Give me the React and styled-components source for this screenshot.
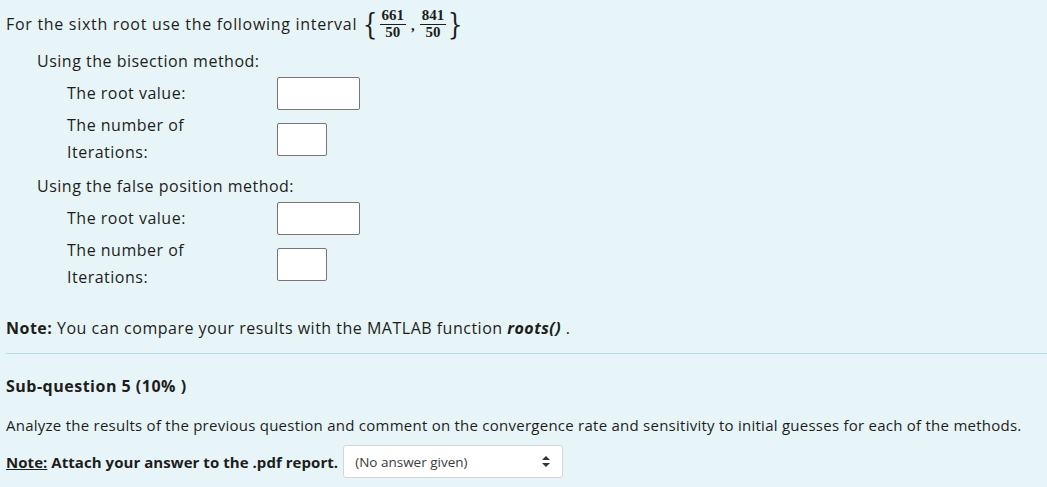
import styled, { createGlobalStyle } from 'styled-components'

const Global = createGlobalStyle`
  html, body {
    margin: 0;
    background: #e7f5f8;
  }
  body {
    font-family: "Open Sans", Lato, sans-serif;
    font-size: 16px;
    letter-spacing: 0.5px;
    color: #1d1d1b;
  }
`

const Page = styled.div`
  padding: 4px 6px 0 6px;
`

const Intro = styled.div`
  display: flex;
  align-items: center;
  height: 40px;
  letter-spacing: 0.7px;
`

const Math = styled.span`
  display: inline-flex;
  align-items: center;
  margin-left: 6px;
  font-family: "Liberation Serif", "DejaVu Serif", serif;
  font-weight: bold;
  font-size: 15px;
  letter-spacing: 0;
`

const Brace = styled.span`
  font-family: "DejaVu Serif", serif;
  font-weight: normal;
  font-size: 29px;
  line-height: 1;
  margin: 0 -2px;
  transform: scaleX(0.8);
`

const Frac = styled.span`
  display: inline-flex;
  flex-direction: column;
  align-items: center;
  margin: 0 2px;
  line-height: 15px;
`

const Num = styled.span`
  border-bottom: 1px solid #1d1d1b;
  padding: 0 2px 1px;
`

const Comma = styled.span`
  align-self: flex-end;
  margin: 0 3px 6px;
`

const Method = styled.div`
  margin: ${p => p.$top || 4}px 0 0 31px;
  line-height: 27px;
`

const Row = styled.div`
  display: flex;
  align-items: flex-start;
  margin-top: 2px;
`

const Label = styled.div`
  width: 271px;
  box-sizing: border-box;
  padding-left: 61px;
  line-height: 27px;
  padding-top: ${p => p.$pt || 0}px;
`

const Box = styled.div`
  width: ${p => p.$w}px;
  height: 33px;
  margin-top: ${p => p.$top || 0}px;
  box-sizing: border-box;
  background: #fff;
  border: 1px solid #767676;
  border-radius: 2px;
`

const Note = styled.p`
  margin: 26px 0 0;
  line-height: 22px;
`

const Rule = styled.hr`
  border: none;
  border-top: 1px solid #b4dce6;
  margin: 14px -6px 0 0;
`

const Heading = styled.div`
  font-weight: bold;
  margin-top: 21px;
  line-height: 22px;
`

const Para = styled.p`
  margin: 17px 0 0;
  font-size: 15px;
  letter-spacing: 0.25px;
  line-height: 22px;
`

const AnswerRow = styled.div`
  display: flex;
  align-items: center;
  margin-top: 9px;
  font-size: 15px;
  letter-spacing: 0.05px;
  font-weight: bold;
`

const Underlined = styled.span`
  text-decoration: underline;
`

const Select = styled.div`
  margin-left: 5px;
  width: 220px;
  height: 33px;
  box-sizing: border-box;
  background: #fff;
  border: 1px solid #d0d7da;
  border-radius: 3px;
  display: flex;
  align-items: center;
  justify-content: space-between;
  padding: 0 12px 0 11px;
  font-weight: normal;
  font-size: 13.5px;
  letter-spacing: 0;
  color: #3b3b3b;
`

const Arrows = () => (
  <svg width="8" height="11" viewBox="0 0 8 11">
    <path d="M4 0 L8 4 L0 4 Z M4 11 L8 7 L0 7 Z" fill="#333" />
  </svg>
)

const RootField = () => (
  <Row>
    <Label $pt={3}>The root value:</Label>
    <Box $w={83} />
  </Row>
)

const CountField = () => (
  <Row>
    <Label>The number of<br />Iterations:</Label>
    <Box $w={50} $top={11} />
  </Row>
)

export default function App() {
  return (
    <>
      <Global />
      <Page>
        <Intro>
          For the sixth root use the following interval
          <Math>
            <Brace>{'{'}</Brace>
            <Frac><Num>661</Num><span>50</span></Frac>
            <Comma>,</Comma>
            <Frac><Num>841</Num><span>50</span></Frac>
            <Brace>{'}'}</Brace>
          </Math>
        </Intro>
        <Method>Using the bisection method:</Method>
        <RootField />
        <CountField />
        <Method $top={7}>Using the false position method:</Method>
        <RootField />
        <CountField />
        <Note><b>Note:</b> You can compare your results with the MATLAB function <b><i>roots()</i></b> .</Note>
        <Rule />
        <Heading>Sub-question 5 (10% )</Heading>
        <Para>Analyze the results of the previous question and comment on the convergence rate and sensitivity to initial guesses for each of the methods.</Para>
        <AnswerRow>
          <Underlined>Note:</Underlined>&nbsp;Attach your answer to the .pdf report.
          <Select>(No answer given)<Arrows /></Select>
        </AnswerRow>
      </Page>
    </>
  )
}
